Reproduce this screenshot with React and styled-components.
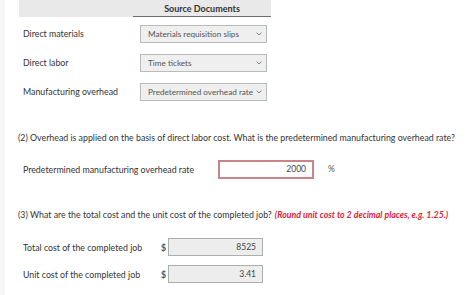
import React from "react";
import styled, { createGlobalStyle } from "styled-components";

const Global = createGlobalStyle`
  html, body { margin: 0; padding: 0; background: #fff; }
  body { font-family: Lato, "Open Sans", sans-serif; color: #333; }
  * { box-sizing: border-box; }
`;

const Page = styled.div`
  width: 474px;
  height: 295px;
  overflow: hidden;
  border-left: 5px solid #f7f7f7;
  padding-left: 13px;
`;

const Table = styled.div`
  display: grid;
  grid-template-columns: 114px 138px;
  margin-left: 1px;
`;

const HeadCell = styled.div`
  height: 17px;
  background: #e9e9e9;
  font-size: 9px;
  font-weight: 700;
  color: #333;
  display: flex;
  align-items: center;
  justify-content: center;
  border-bottom: ${(p) => (p.$line ? "1px solid #6d6d6d" : "1px solid transparent")};
`;

const Label = styled.div`
  height: 29px;
  display: flex;
  align-items: center;
  padding-left: 4px;
  font-size: 8.8px;
  color: #333;
  margin-top: ${(p) => (p.$first ? "2px" : "0")};
`;

const SelectCell = styled.div`
  height: 29px;
  display: flex;
  align-items: center;
  padding-left: 7px;
  margin-top: ${(p) => (p.$first ? "2px" : "0")};
`;

const SelectBox = styled.div`
  width: 127px;
  height: 18px;
  background: #eeefee;
  border: 1px solid #b6bdb6;
  display: flex;
  align-items: center;
  padding: 0 4px 0 7px;
  font-size: 8.2px;
  color: #555;
  white-space: nowrap;
`;

const SelectText = styled.span`
  flex: 1;
  min-width: 0;
`;

const Chevron = () => (
  <svg width="6" height="4" viewBox="0 0 6 4" style={{ flexShrink: 0, marginLeft: 2 }}>
    <path d="M0.6 0.6 L3 3 L5.4 0.6" fill="none" stroke="#777" strokeWidth="0.9" />
  </svg>
);

const Question = styled.div`
  font-size: 8.8px;
  color: #333;
  margin-top: ${(p) => p.$mt}px;
  height: 14px;
  display: flex;
  align-items: center;
  white-space: nowrap;
`;

const Hint = styled.span`
  color: #e0233a;
  font-weight: 700;
  font-style: italic;
  margin-left: 3px;
`;

const Row = styled.div`
  display: flex;
  align-items: center;
  height: 20px;
  margin-top: ${(p) => p.$mt}px;
  padding-left: 5px;
`;

const RowLabel = styled.div`
  width: ${(p) => p.$w}px;
  font-size: 8.8px;
  color: #333;
  white-space: nowrap;
`;

const RateInput = styled.div`
  width: 96px;
  height: 19px;
  border: 2px solid #c88486;
  background: #fff;
  font-size: 8.5px;
  color: #444;
  display: flex;
  align-items: center;
  justify-content: flex-end;
  padding-right: 6px;
`;

const Unit = styled.span`
  font-size: 8.5px;
  color: #555;
  margin-left: 14px;
`;

const Dollar = styled.span`
  font-size: 8.8px;
  font-weight: 700;
  color: #555;
  width: 7px;
`;

const CostInput = styled.div`
  width: 95px;
  height: 18px;
  border: 1px solid #a9b0a9;
  background: #ededed;
  font-size: 8.5px;
  color: #444;
  display: flex;
  align-items: center;
  justify-content: flex-end;
  padding-right: 6px;
`;

const sources = [
  ["Direct materials", "Materials requisition slips"],
  ["Direct labor", "Time tickets"],
  ["Manufacturing overhead", "Predetermined overhead rate"],
];

export default function App() {
  return (
    <>
      <Global />
      <Page>
        <Table>
          <HeadCell />
          <HeadCell $line>Source Documents</HeadCell>
          {sources.map(([l, s], i) => (
            <React.Fragment key={l}>
              <Label $first={i === 0}>{l}</Label>
              <SelectCell $first={i === 0}>
                <SelectBox>
                  <SelectText>{s}</SelectText>
                  <Chevron />
                </SelectBox>
              </SelectCell>
            </React.Fragment>
          ))}
        </Table>
        <Question $mt={24}>
          (2) Overhead is applied on the basis of direct labor cost. What is the predetermined manufacturing overhead rate?
        </Question>
        <Row $mt={15}>
          <RowLabel $w={195}>Predetermined manufacturing overhead rate</RowLabel>
          <RateInput>2000</RateInput>
          <Unit>%</Unit>
        </Row>
        <Question $mt={28}>
          (3) What are the total cost and the unit cost of the completed job?
          <Hint>(Round unit cost to 2 decimal places, e.g. 1.25.)</Hint>
        </Question>
        <Row $mt={16}>
          <RowLabel $w={138}>Total cost of the completed job</RowLabel>
          <Dollar>$</Dollar>
          <CostInput>8525</CostInput>
        </Row>
        <Row $mt={7}>
          <RowLabel $w={138}>Unit cost of the completed job</RowLabel>
          <Dollar>$</Dollar>
          <CostInput>3.41</CostInput>
        </Row>
      </Page>
    </>
  );
}
